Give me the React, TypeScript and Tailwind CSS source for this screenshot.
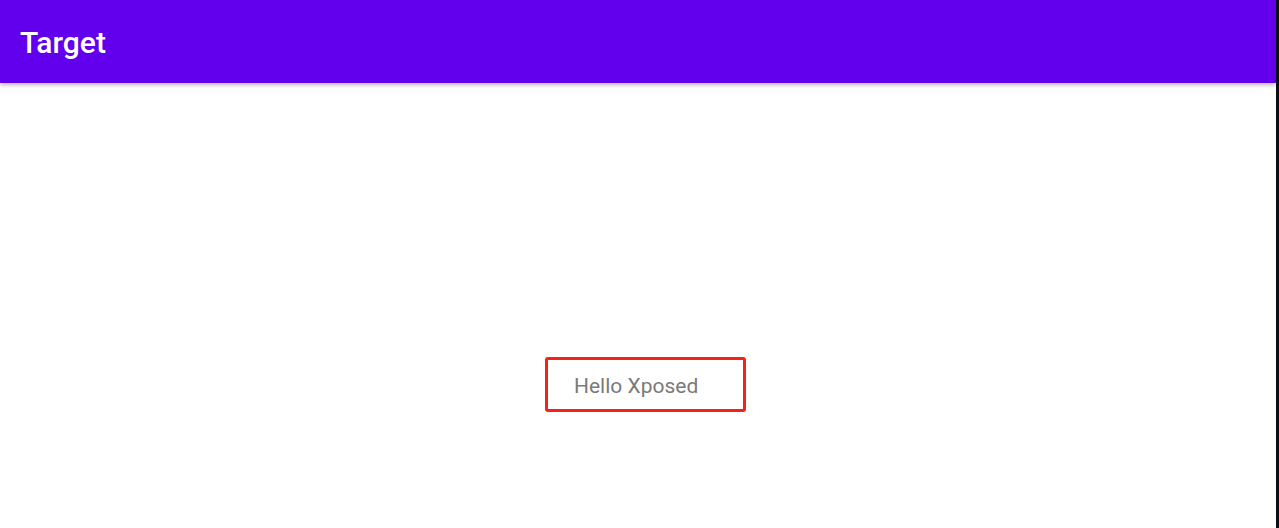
export default function App() {
  return (
    <div className="flex h-[528px] w-full overflow-hidden bg-white font-['Roboto',sans-serif]">
      <div className="flex flex-1 flex-col">
        {/* App bar */}
        <header className="relative z-10 flex h-[83px] items-center bg-[#6200ee] pl-5 pt-[3px] shadow-[0_2px_4px_rgba(0,0,0,0.28)]">
          <h1 className="text-[30px] font-medium leading-none text-white">Target</h1>
        </header>

        {/* Content */}
        <main className="flex-1 pl-[545px] pt-[274px]">
          <div className="flex h-[55px] w-[201px] items-center rounded-[3px] border-[3px] border-[#f5221b] pl-[26px] pt-[3px]">
            <span className="text-[21px] leading-none text-[#7a7a7a]">Hello Xposed</span>
          </div>
        </main>
      </div>
      <div className="w-[3px] bg-[#0b1016]" />
    </div>
  )
}
